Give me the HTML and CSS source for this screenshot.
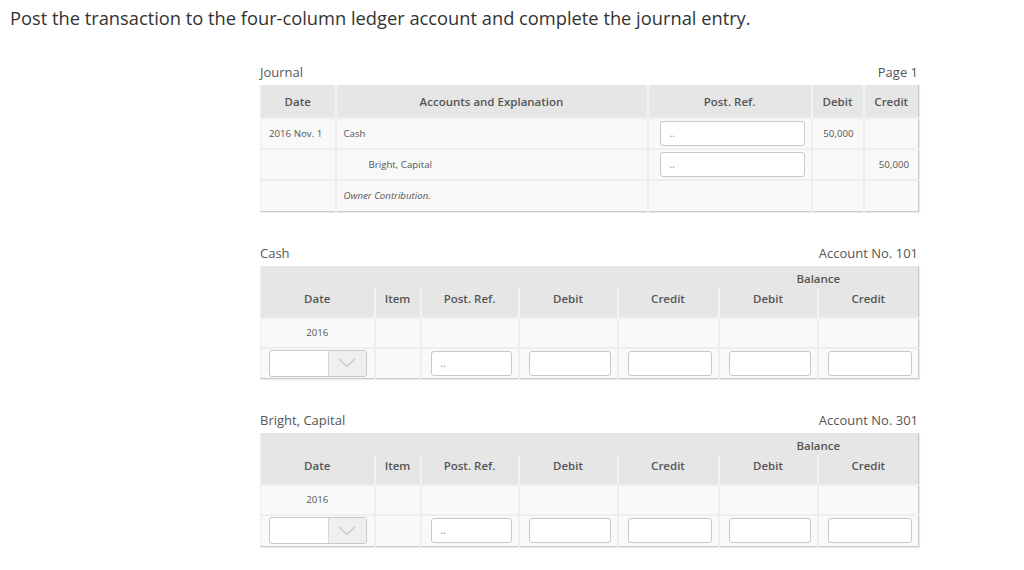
FILE: index.html
```html
<!DOCTYPE html>
<html>
<head>
<meta charset="utf-8">
<link rel="stylesheet" href="styles.css">
</head>
<body>
<h1 class="title">Post the transaction to the four-column ledger account and complete the journal entry.</h1>
<main class="wrap">
  <section class="block journal-block">
    <div class="caption"><span>Journal</span><span>Page 1</span></div>
    <table class="grid journal">
      <colgroup>
        <col class="j-date"><col class="j-acc"><col class="j-ref"><col class="j-deb"><col class="j-cre">
      </colgroup>
      <thead>
        <tr><th>Date</th><th>Accounts and Explanation</th><th>Post. Ref.</th><th>Debit</th><th>Credit</th></tr>
      </thead>
      <tbody>
        <tr>
          <td class="date">2016 Nov. 1</td>
          <td class="acc">Cash</td>
          <td class="ref"><div class="field">..</div></td>
          <td class="num">50,000</td>
          <td class="num"></td>
        </tr>
        <tr>
          <td></td>
          <td class="acc indent">Bright, Capital</td>
          <td class="ref"><div class="field">..</div></td>
          <td class="num"></td>
          <td class="num">50,000</td>
        </tr>
        <tr>
          <td></td>
          <td class="acc expl">Owner Contribution.</td>
          <td></td>
          <td></td>
          <td></td>
        </tr>
      </tbody>
    </table>
  </section>

  <section class="block">
    <div class="caption"><span>Cash</span><span>Account No. 101</span></div>
    <table class="grid ledger">
      <colgroup>
        <col class="l-date"><col class="l-item"><col class="l-ref"><col class="l-amt"><col class="l-amt2"><col class="l-amt"><col class="l-amt2">
      </colgroup>
      <thead>
        <tr class="top"><th colspan="5"></th><th colspan="2">Balance</th></tr>
        <tr class="names"><th>Date</th><th>Item</th><th>Post. Ref.</th><th>Debit</th><th>Credit</th><th>Debit</th><th>Credit</th></tr>
      </thead>
      <tbody>
        <tr class="year"><td>2016</td><td></td><td></td><td></td><td></td><td></td><td></td></tr>
        <tr class="entry">
          <td class="sel-cell"><div class="select"><span class="sel-val"></span><span class="sel-btn"><svg width="18" height="10" viewBox="0 0 18 10"><path d="M1 1 L9 8.5 L17 1" fill="none" stroke="#c8c8c8" stroke-width="1.2"/></svg></span></div></td>
          <td></td>
          <td class="inp"><div class="field">..</div></td>
          <td class="inp"><div class="field"></div></td>
          <td class="inp"><div class="field"></div></td>
          <td class="inp"><div class="field"></div></td>
          <td class="inp"><div class="field"></div></td>
        </tr>
      </tbody>
    </table>
  </section>

  <section class="block">
    <div class="caption"><span>Bright, Capital</span><span>Account No. 301</span></div>
    <table class="grid ledger">
      <colgroup>
        <col class="l-date"><col class="l-item"><col class="l-ref"><col class="l-amt"><col class="l-amt2"><col class="l-amt"><col class="l-amt2">
      </colgroup>
      <thead>
        <tr class="top"><th colspan="5"></th><th colspan="2">Balance</th></tr>
        <tr class="names"><th>Date</th><th>Item</th><th>Post. Ref.</th><th>Debit</th><th>Credit</th><th>Debit</th><th>Credit</th></tr>
      </thead>
      <tbody>
        <tr class="year"><td>2016</td><td></td><td></td><td></td><td></td><td></td><td></td></tr>
        <tr class="entry">
          <td class="sel-cell"><div class="select"><span class="sel-val"></span><span class="sel-btn"><svg width="18" height="10" viewBox="0 0 18 10"><path d="M1 1 L9 8.5 L17 1" fill="none" stroke="#c8c8c8" stroke-width="1.2"/></svg></span></div></td>
          <td></td>
          <td class="inp"><div class="field">..</div></td>
          <td class="inp"><div class="field"></div></td>
          <td class="inp"><div class="field"></div></td>
          <td class="inp"><div class="field"></div></td>
          <td class="inp"><div class="field"></div></td>
        </tr>
      </tbody>
    </table>
  </section>
</main>
</body>
</html>
```

FILE: styles.css
```css
html, body {
  margin: 0;
  padding: 0;
  background: #ffffff;
}
body {
  font-family: "Open Sans", "Noto Sans", sans-serif;
  color: #333;
}
.title {
  margin: 0;
  padding: 7px 10px 0 10px;
  font-size: 18.3px;
  line-height: 22px;
  font-weight: 400;
  color: #333;
}
.wrap {
  margin-left: 260px;
  width: 658px;
  padding-top: 34px;
}
.block {
  margin-bottom: 32px;
}
.caption {
  display: flex;
  justify-content: space-between;
  font-size: 13px;
  line-height: 18px;
  color: #555;
  margin-bottom: 4px;
}
.grid {
  width: 658px;
  table-layout: fixed;
  border-collapse: collapse;
  font-size: 9.7px;
  color: #555;
  border-right: 1px solid #c9c9c9;
  border-bottom: 1px solid #c9c9c9;
  border-left: 1px solid #f0f0f0;
  box-shadow: 1px 1px 1px rgba(0,0,0,0.08);
}
.grid th {
  background: #e6e6e6;
  font-size: 11.5px;
  font-weight: 600;
  color: #555;
  text-align: center;
  line-height: 16px;
  border-left: 2px solid #f3f3f3;
  border-bottom: 1px solid #f3f3f3;
}
.grid th:first-child {
  border-left: none;
}
.grid td {
  background: #f9f9f9;
  border-left: 2px solid #eeeeee;
  border-top: 2px solid #eeeeee;
  line-height: 14px;
  padding: 0;
}
.grid td:first-child {
  border-left: none;
}

/* journal */
.j-date { width: 75px; }
.j-acc { width: 312px; }
.j-ref { width: 164px; }
.j-deb { width: 52px; }
.j-cre { width: 55px; }
.journal th {
  height: 33px;
  padding: 1px 0 0;
  box-sizing: border-box;
}
.journal td {
  height: 31px;
  box-sizing: border-box;
}
.journal .date {
  padding-left: 8px;
}
.journal .acc {
  padding-left: 7px;
}
.journal .acc.indent {
  padding-left: 32px;
}
.journal .acc.expl {
  font-style: italic;
}
.journal .num {
  text-align: right;
  padding-right: 9px;
}
.journal .ref {
  padding: 0 6px 0 11px;
}

.field {
  box-sizing: border-box;
  height: 25px;
  background: #fff;
  border: 1px solid #c8c8c8;
  border-radius: 3px;
  font-size: 10px;
  line-height: 23px;
  color: #888;
  padding-left: 9px;
}

/* ledger */
.l-date { width: 114px; }
.l-item { width: 46px; }
.l-ref { width: 98px; }
.l-amt { width: 99px; }
.l-amt2 { width: 101px; }
.ledger tr.top th {
  height: 22px;
  padding: 5px 0 1px;
  box-sizing: border-box;
  border-left: none;
  border-bottom: none;
  vertical-align: top;
}
.ledger tr.names th {
  height: 29px;
  padding: 3px 4px 10px;
  box-sizing: border-box;
  vertical-align: top;
}
.ledger tr.year td {
  height: 30px;
  box-sizing: border-box;
  text-align: center;
}
.ledger tr.entry td {
  height: 31px;
  box-sizing: border-box;
}
.ledger td.inp {
  padding: 0 6px 0 9px;
}
.ledger td.sel-cell {
  padding: 0 7px 0 8px;
}
.select {
  display: flex;
  height: 27px;
  box-sizing: border-box;
  border: 1px solid #c8c8c8;
  border-radius: 3px;
  background: #fff;
  overflow: hidden;
}
.sel-val {
  flex: 1;
}
.sel-btn {
  width: 37px;
  display: flex;
  align-items: center;
  justify-content: center;
  background: #efefef;
  border-left: 1px solid #d6d6d6;
}
```
